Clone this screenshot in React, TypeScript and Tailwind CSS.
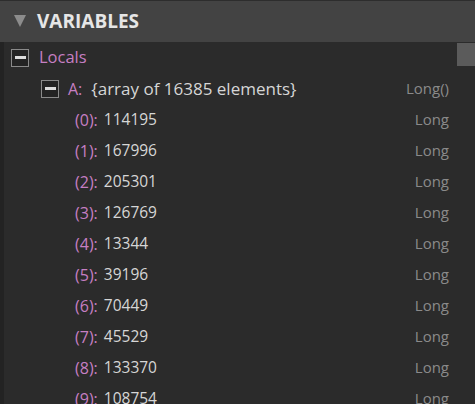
const values = [114195, 167996, 205301, 126769, 13344, 39196, 70449, 45529, 133370, 108754];

function MinusBox() {
  return (
    <span className="flex h-[18px] w-[18px] shrink-0 items-center justify-center border border-[#8a8a8a] bg-[#232323]">
      <span className="h-[3px] w-[11px] bg-[#dcdcdc]" />
    </span>
  );
}

export default function App() {
  return (
    <div
      className="flex h-[404px] w-[475px] flex-col overflow-hidden bg-[#2b2b2b]"
      style={{ fontFamily: '"Open Sans", "Noto Sans", sans-serif' }}
    >
      {/* Header */}
      <div className="h-px bg-[#2d2d2d]" />
      <div className="flex h-[41px] shrink-0 items-center bg-[#434343] pl-[14px]">
        <svg width="12" height="12" viewBox="0 0 12 12" className="mt-[-2px]">
          <path d="M0 0h12L6 12z" fill="#8c8c8c" />
        </svg>
        <span className="ml-[11px] text-[19px] font-bold text-[#e6e6e6]">VARIABLES</span>
      </div>

      {/* Body */}
      <div className="flex min-h-0 flex-1">
        <div className="w-[4px] shrink-0 bg-[#232323]" />
        <div className="flex min-w-0 flex-1 flex-col">
          <div className="flex h-[31px] shrink-0 items-center pl-[7px]">
            <MinusBox />
            <span className="ml-[10px] text-[16.5px] text-[#c67fc3]">Locals</span>
          </div>
          <div className="flex h-[31px] shrink-0 items-center pl-[37px] pr-[8px]">
            <MinusBox />
            <span className="ml-[9px] text-[16px] text-[#c67fc3]">A:</span>
            <span className="ml-[9px] text-[17px] text-[#d6d6d6]">{"{array of 16385 elements}"}</span>
            <span className="ml-auto text-[15px] text-[#8a8a8a]">Long()</span>
          </div>
          {values.map((v, i) => (
            <div key={i} className="flex h-[31px] shrink-0 items-center pl-[71px] pr-[8px]">
              <span className="text-[16px] text-[#c67fc3]">({i}):</span>
              <span className="ml-[6px] text-[15.5px] text-[#d6d6d6]">{v}</span>
              <span className="ml-auto text-[15px] text-[#8a8a8a]">Long</span>
            </div>
          ))}
        </div>
        {/* Scrollbar */}
        <div className="w-[18px] shrink-0">
          <div className="mt-[1px] h-[23px] bg-[#5b5b5b]" />
        </div>
      </div>
    </div>
  );
}
